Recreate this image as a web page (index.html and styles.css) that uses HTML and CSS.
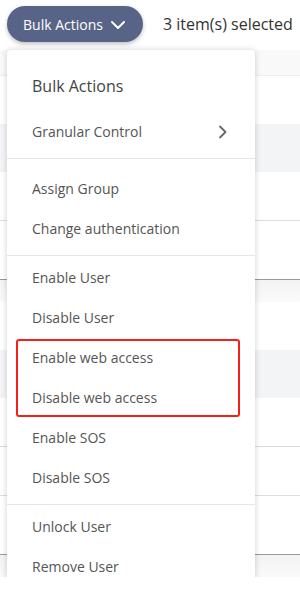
FILE: index.html
```html
<!DOCTYPE html>
<html>
<head>
    <meta charset="utf-8">
    <title>Bulk Actions</title>
    <link rel="stylesheet" href="styles.css">
</head>
<body>

<div class="toolbar">
    <button class="bulk-btn">
        Bulk Actions
        <svg class="bulk-btn-arrow" width="14" height="8" viewBox="0 0 14 8"><path d="M1 1l6 6 6-6" fill="none" stroke="#fff" stroke-width="2" stroke-linecap="round" stroke-linejoin="round"/></svg>
    </button>
    <span class="selected-count">3 item(s) selected</span>
</div>

<div class="page">
    <!-- table rows behind the menu -->
    <div class="rows">
        <div class="row row-head"></div>
        <div class="row"></div>
        <div class="row row-gray"></div>
        <div class="row row-line"></div>
        <div class="row row-end"></div>
        <div class="row row-fade"></div>
        <div class="row"></div>
        <div class="row row-gray"></div>
        <div class="row row-line"></div>
        <div class="row row-line"></div>
        <div class="row row-end"></div>
        <div class="row row-fade"></div>
    </div>

    <div class="menu">
        <div class="menu-title">Bulk Actions</div>
        <div class="menu-group">
            <div class="menu-item menu-item-sub">
                Granular Control
                <svg width="9" height="14" viewBox="0 0 9 14"><path d="M2 1.5l5.5 5.5-5.5 5.5" fill="none" stroke="#666" stroke-width="1.8" stroke-linecap="round" stroke-linejoin="round"/></svg>
            </div>
        </div>
        <div class="menu-group menu-group-pt">
            <div class="menu-item">Assign Group</div>
            <div class="menu-item">Change authentication</div>
        </div>
        <div class="menu-group">
            <div class="menu-item">Enable User</div>
            <div class="menu-item">Disable User</div>
            <div class="menu-mark">
                <div class="menu-item">Enable web access</div>
                <div class="menu-item">Disable web access</div>
            </div>
            <div class="menu-item">Enable SOS</div>
            <div class="menu-item">Disable SOS</div>
        </div>
        <div class="menu-group">
            <div class="menu-item">Unlock User</div>
            <div class="menu-item">Remove User</div>
        </div>
    </div>
</div>

</body>
</html>
```

FILE: styles.css
```css
body{
    margin: 0;padding: 0;
    font-family: "Open Sans", "Liberation Sans", sans-serif;
    color: #333;background: #fff;
    overflow: hidden;
}

/*顶部工具条*/
.toolbar{
    display: flex;align-items: center;
    height: 36px;padding: 6px 7px 8px;
}
.bulk-btn{
    display: flex;align-items: center;gap: 8px;
    width: 136px;height: 36px;padding: 0 0 0 16px;
    border: none;border-radius: 18px;
    background: #586487;color: #fff;
    font-family: inherit;font-size: 14px;
    box-shadow: 0 2px 4px rgba(0,0,0,.25);
}
.bulk-btn-arrow{margin-top: 1px;}
.selected-count{
    margin-left: 20px;font-size: 16px;color: #333;
}

/*背景表格*/
.page{position: relative;}
.row{height: 48px;}
.row-head{height: 25px;background: #f9f9fa;border-bottom: 1px solid #eee;}
.row-gray{background: #f3f4f6;}
.row-line{border-bottom: 1px solid #ddd;}
.row-end{height: 58px;border-bottom: 1px solid #999;}
.row-fade{height: 22px;background: linear-gradient(#f3f3f3, #fafafa);}

/*下拉菜单*/
.menu{
    position: absolute;top: 0;left: 7px;
    width: 248px;height: 560px;
    background: #fff;border-radius: 4px 4px 0 0;
    box-shadow: 0 0 6px rgba(0,0,0,.18);
}
.menu-title{
    padding: 26px 25px 14px;
    line-height: 20px;font-size: 16px;color: #444;
}
.menu-group{
    padding-bottom: 8px;
    border-bottom: 1px solid #e6e6e6;
}
.menu-group:last-child{border-bottom: none;}
.menu-group-pt{padding-top: 8px;}
.menu-item{
    height: 40px;line-height: 36px;padding: 4px 25px 0;
    box-sizing: border-box;
    font-size: 14px;color: #555;
}
.menu-item-sub{
    display: flex;align-items: center;justify-content: space-between;
    padding-right: 28px;
}

/*红框标注*/
.menu-mark{position: relative;}
.menu-mark::after{
    content: "";position: absolute;
    top: 3px;left: 9px;right: 15px;bottom: -1px;
    border: 2px solid #f5201a;border-radius: 3px;
}
```
